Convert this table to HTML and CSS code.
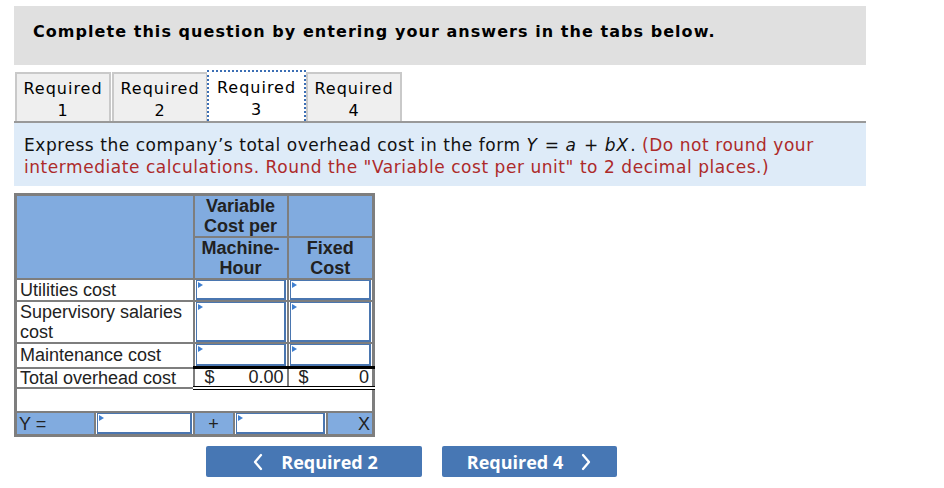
FILE: index.html
```html
<!DOCTYPE html>
<html>
<head>
<meta charset="utf-8">
<link rel="stylesheet" href="styles.css">
</head>
<body>
<div class="page">
  <div class="banner">Complete this question by entering your answers in the tabs below.</div>
  <div class="tabs">
    <div class="tab">Required<br>1</div>
    <div class="tab">Required<br>2</div>
    <div class="tab active">Required<br>3</div>
    <div class="tab">Required<br>4</div>
  </div>
  <div class="prompt">
    Express the company’s total overhead cost in the form <i>Y</i> = <i>a</i> + <i>bX</i>. <span class="red">(Do not round your intermediate calculations. Round the "Variable cost per unit" to 2 decimal places.)</span>
  </div>
  <table class="grid">
    <colgroup>
      <col class="c1"><col class="c2"><col class="c3"><col class="c4"><col class="c5"><col class="c6">
    </colgroup>
    <tr class="hrow">
      <th colspan="2" rowspan="2" class="hdr"></th>
      <th colspan="2" class="hdr">Variable<br>Cost per</th>
      <th colspan="2" class="hdr"></th>
    </tr>
    <tr class="hrow">
      <th colspan="2" class="hdr">Machine-<br>Hour</th>
      <th colspan="2" class="hdr">Fixed<br>Cost</th>
    </tr>
    <tr class="r1">
      <td colspan="2" class="lbl">Utilities cost</td>
      <td colspan="2" class="inp"><div class="box"></div></td>
      <td colspan="2" class="inp"><div class="box"></div></td>
    </tr>
    <tr class="r2">
      <td colspan="2" class="lbl">Supervisory salaries cost</td>
      <td colspan="2" class="inp"><div class="box"></div></td>
      <td colspan="2" class="inp"><div class="box"></div></td>
    </tr>
    <tr class="r3">
      <td colspan="2" class="lbl">Maintenance cost</td>
      <td colspan="2" class="inp"><div class="box"></div></td>
      <td colspan="2" class="inp"><div class="box"></div></td>
    </tr>
    <tr class="r4">
      <td colspan="2" class="lbl">Total overhead cost</td>
      <td colspan="2" class="tot"><div class="money"><span>$</span><span>0.00</span></div></td>
      <td colspan="2" class="tot"><div class="money"><span>$</span><span>0</span></div></td>
    </tr>
    <tr class="r5">
      <td colspan="6" class="blank"><div class="spacer"></div></td>
    </tr>
    <tr class="r6">
      <td class="yl">Y =</td>
      <td class="inp"><div class="box"></div></td>
      <td class="plus">+</td>
      <td colspan="2" class="inp"><div class="box"></div></td>
      <td class="xl">X</td>
    </tr>
  </table>
  <div class="nav">
    <button class="btn prev"><svg class="chev" width="12" height="18" viewBox="0 0 12 18"><polyline points="9,2 3,9 9,16" fill="none" stroke="#fff" stroke-width="2.3" stroke-linecap="round" stroke-linejoin="round"/></svg><span>Required 2</span></button>
    <button class="btn next"><span>Required 4</span><svg class="chev" width="12" height="18" viewBox="0 0 12 18"><polyline points="3,2 9,9 3,16" fill="none" stroke="#fff" stroke-width="2.3" stroke-linecap="round" stroke-linejoin="round"/></svg></button>
  </div>
</div>
</body>
</html>
```

FILE: styles.css
```css
* { box-sizing: border-box; }
body {
  margin: 0;
  background: #fff;
  font-family: "DejaVu Sans", Verdana, sans-serif;
  color: #000;
}
.page {
  padding: 6px 0 0 14px;
  width: 866px;
}
.banner {
  height: 59px;
  background: #e0e0e0;
  font-weight: bold;
  font-size: 16px;
  letter-spacing: 1.05px;
  padding: 16px 0 0 19px;
  line-height: 20px;
}
.tabs {
  display: flex;
  margin-top: 7px;
  padding-left: 1px;
  gap: 1px;
  border-bottom: 2px solid #999;
  height: 51px;
  align-items: flex-end;
}
.tab {
  width: 96px;
  height: 49px;
  background: #efefef;
  border: 2px solid #c9c9c9;
  border-bottom: none;
  text-align: center;
  font-size: 16px;
  letter-spacing: 1px;
  line-height: 22px;
  padding-top: 4px;
}
.tab.active {
  background: #fff;
  border: 2px dotted #3b6eb4;
  border-bottom: none;
  height: 51px;
  margin: 0 -1px 0 -2px;
  width: 99px;
  padding-top: 5px;
}
.prompt {
  background: #deebf8;
  font-size: 17px;
  letter-spacing: 0.55px;
  line-height: 22px;
  padding: 11px 10px 8px 10px;
  color: #111;
}
.prompt i { letter-spacing: 1px; padding-right: 1px; }
.red { color: #ad2a2a; }
.grid {
  margin-top: 7px;
  border-collapse: collapse;
  table-layout: fixed;
  width: 358px;
  border: 3px solid #7e7e7e;
  font-family: "Liberation Sans", Arial, sans-serif;
  font-size: 18px;
  color: #222;
}
.grid td, .grid th {
  border: 2px solid #7e7e7e;
  padding: 0;
}
.c1 { width: 79px; }
.c2 { width: 99px; }
.c3 { width: 40px; }
.c4 { width: 54px; }
.c5 { width: 39px; }
.c6 { width: 47px; }
.hdr {
  background: #81abdf;
  font-weight: bold;
  line-height: 20px;
  text-align: center;
  vertical-align: middle;
  color: #222;
}
.lbl {
  padding: 0 3px !important;
  line-height: 20px;
  vertical-align: middle;
}
.inp { background: #fff; }
.box {
  position: relative;
  border: 1px solid #4a76b0;
  border-width: 1px 2px 2px 1px;
  margin: 0 1px;
}
.r1 .box { height: 20px; }
.r2 .box { height: 40px; }
.r3 .box { height: 22px; }
.r6 .box { height: 21px; }
.box::before {
  content: "";
  position: absolute;
  left: 1px;
  top: 1px;
  border-left: 5px solid #3f7fd0;
  border-top: 3px solid transparent;
  border-bottom: 3px solid transparent;
}
.tot {
  border-top: 3px solid #000 !important;
  border-bottom: 4px double #000 !important;
}
.money {
  display: flex;
  justify-content: space-between;
  padding: 0 3px 0 10px;
  line-height: 17px;
}
.r4 .lbl { line-height: 18px; }
.blank { background: #fff; }
.spacer { height: 21px; }
.yl, .plus, .xl {
  background: #81abdf;
  line-height: 20px;
}
.yl { padding-left: 2px !important; }
.plus { text-align: center; }
.xl { text-align: right; padding-right: 2px !important; }
.nav {
  display: flex;
  gap: 20px;
  margin: 9px 0 0 192px;
}
.btn {
  height: 31px;
  border: none;
  border-radius: 2px;
  background: #4777b4;
  color: #fff;
  font-family: "Open Sans", "DejaVu Sans", sans-serif;
  font-weight: bold;
  font-size: 18px;
  padding: 0;
  display: flex;
  align-items: center;
  justify-content: center;
}
.prev { width: 216px; }
.next { width: 175px; }
.prev .chev { margin-right: 17px; margin-left: 2px; }
.next .chev { margin-left: 17px; margin-right: 0; }
```
